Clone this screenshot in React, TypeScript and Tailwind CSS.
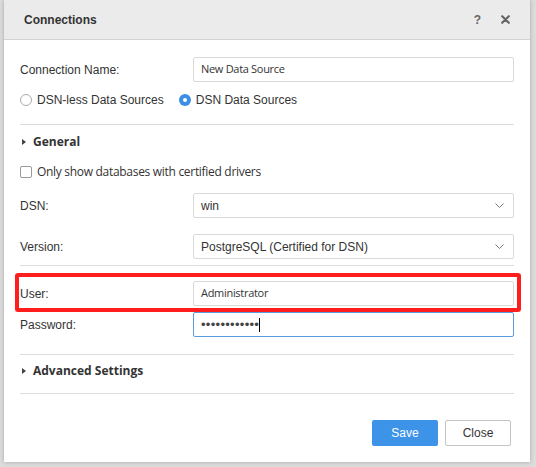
import React from 'react';

const arial = { fontFamily: '"Liberation Sans", Arial, sans-serif' };
const open = { fontFamily: '"Open Sans", "Noto Sans", sans-serif' };

const Chevron = () => (
    <svg width="9" height="5" viewBox="0 0 9 5" className="ml-auto mr-[9px]">
        <polyline points="0.5,0.5 4.5,4.5 8.5,0.5" fill="none" stroke="#777" strokeWidth="1" />
    </svg>
);

const Caret = () => (
    <span className="inline-block w-0 h-0 border-l-[4px] border-l-[#444] border-y-[3px] border-y-transparent mr-[7px] ml-[2px]" />
);

const Divider = ({ className }: { className: string }) => (
    <div className={`border-t border-[#dcdcdc] ${className}`} />
);

export default function App() {
    return (
        <div className="w-[536px] h-[467px] bg-[#dcdcdc] pl-[4px] overflow-hidden" style={arial}>
            <div className="w-[526px] h-[462px] bg-white shadow-[0_0_4px_rgba(0,0,0,0.25)] flex flex-col">
                {/* Header */}
                <div className="h-[40px] bg-[#ebebeb] border-b border-[#d2d2d2] flex items-center pl-[20px] shrink-0">
                    <span className="text-[12px] font-bold text-[#333]">Connections</span>
                    <span className="ml-auto text-[12px] font-bold text-[#666] mr-[20px]">?</span>
                    <svg width="9" height="9" viewBox="0 0 9 9" className="mr-[20px]">
                        <path d="M1.2 1.2 L7.8 7.8 M7.8 1.2 L1.2 7.8" stroke="#666" strokeWidth="2.2" strokeLinecap="round" />
                    </svg>
                </div>

                <div className="px-[16px] flex flex-col text-[12px] text-[#333]">
                    {/* Connection name */}
                    <div className="mt-[17px] h-[25px] flex items-center">
                        <span className="w-[173px] shrink-0">Connection Name:</span>
                        <div className="flex-1 h-[25px] border border-[#d9d9d9] rounded-[2px] px-[7px] flex items-center text-[11px] tracking-[-0.3px]" style={open}>
                            New Data Source
                        </div>
                    </div>

                    {/* Radios */}
                    <div className="mt-[10px] h-[16px] flex items-center">
                        <span className="w-[12px] h-[12px] rounded-full border border-[#aaa] bg-white" />
                        <span className="ml-[5px]">DSN-less Data Sources</span>
                        <span className="ml-[15px] w-[12px] h-[12px] rounded-full bg-[#3d8fe6] flex items-center justify-center">
                            <span className="w-[4px] h-[4px] rounded-full bg-white" />
                        </span>
                        <span className="ml-[5px]">DSN Data Sources</span>
                    </div>

                    <Divider className="mt-[16px]" />

                    {/* General */}
                    <div className="mt-[9px] h-[16px] flex items-center">
                        <Caret />
                        <span className="text-[12px] font-bold text-[#333]" style={open}>General</span>
                    </div>

                    <div className="mt-[14px] h-[16px] flex items-center">
                        <span className="w-[12px] h-[12px] rounded-[2px] border border-[#999] bg-white" />
                        <span className="ml-[5px] text-[12px] tracking-[-0.3px]" style={open}>Only show databases with certified drivers</span>
                    </div>

                    {/* DSN */}
                    <div className="mt-[13px] h-[25px] flex items-center">
                        <span className="w-[173px] shrink-0">DSN:</span>
                        <div className="flex-1 h-[25px] border border-[#d9d9d9] rounded-[2px] pl-[7px] flex items-center">
                            win
                            <Chevron />
                        </div>
                    </div>

                    {/* Version */}
                    <div className="mt-[16px] h-[25px] flex items-center">
                        <span className="w-[173px] shrink-0">Version:</span>
                        <div className="flex-1 h-[25px] border border-[#d9d9d9] rounded-[2px] pl-[7px] flex items-center">
                            PostgreSQL (Certified for DSN)
                            <Chevron />
                        </div>
                    </div>

                    <Divider className="mt-[6px]" />

                    {/* User (highlighted) */}
                    <div className="mt-[15px] h-[25px] flex items-center relative">
                        <span className="w-[173px] shrink-0">User:</span>
                        <div className="flex-1 h-[25px] border border-[#d9d9d9] rounded-[2px] px-[7px] flex items-center text-[11px] tracking-[-0.3px]" style={open}>
                            Administrator
                        </div>
                        <div className="absolute left-[-5px] right-[-7px] top-[-8px] bottom-[-6px] border-[4px] border-[#ff1e1e] rounded-[3px] pointer-events-none" />
                    </div>

                    {/* Password */}
                    <div className="mt-[6px] h-[25px] flex items-center">
                        <span className="w-[173px] shrink-0">Password:</span>
                        <div className="flex-1 h-[25px] border border-[#5b9be0] rounded-[2px] px-[7px] flex items-center">
                            <span className="text-[13px] tracking-[0.3px] text-[#444]">••••••••••••</span>
                            <span className="w-px h-[14px] bg-black" />
                        </div>
                    </div>

                    <Divider className="mt-[17px]" />

                    <div className="mt-[8px] h-[16px] flex items-center">
                        <Caret />
                        <span className="text-[12px] font-bold text-[#333]" style={open}>Advanced Settings</span>
                    </div>

                    <Divider className="mt-[14px]" />

                    {/* Footer */}
                    <div className="mt-[26px] flex justify-end gap-[7px] pr-[3px]">
                        <button className="w-[66px] h-[26px] rounded-[2px] bg-[#3d93e8] text-white text-[12px]">Save</button>
                        <button className="w-[66px] h-[26px] rounded-[2px] bg-white border border-[#c4c4c4] text-[#333] text-[12px]">Close</button>
                    </div>
                </div>
            </div>
        </div>
    );
}
